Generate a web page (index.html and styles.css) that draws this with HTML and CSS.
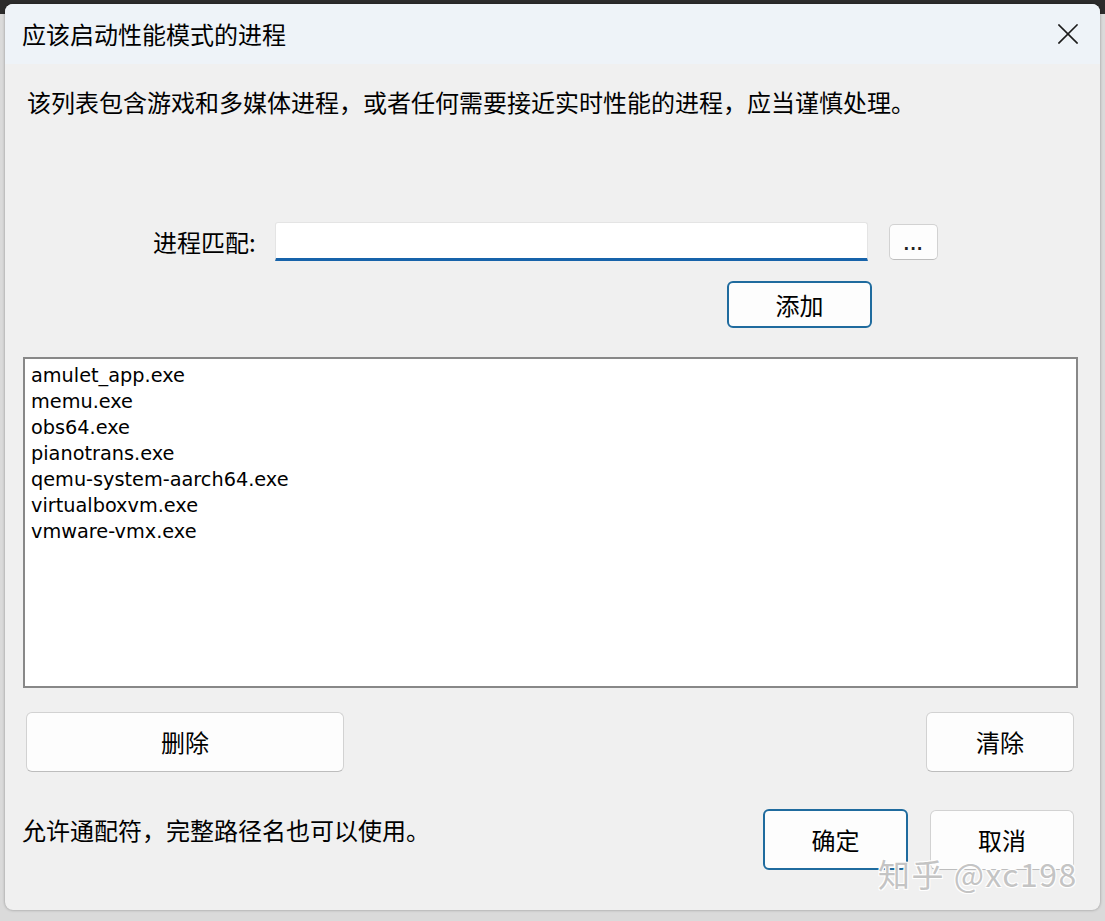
FILE: index.html
```html
<!DOCTYPE html>
<html>

<head>
  <meta charset="UTF-8" />
  <title>应该启动性能模式的进程</title>
  <link rel="stylesheet" href="styles.css">
</head>

<body>
  <div class="dialog">
    <div class="titlebar">
      <span class="title">应该启动性能模式的进程</span>
      <svg class="close" xmlns="http://www.w3.org/2000/svg" viewBox="0 0 20 20" fill="none" stroke="currentColor"
        stroke-width="1.6" stroke-linecap="square">
        <line x1="1" y1="1" x2="19" y2="19"></line>
        <line x1="19" y1="1" x2="1" y2="19"></line>
      </svg>
    </div>

    <div class="content">
      <p class="desc">该列表包含游戏和多媒体进程，或者任何需要接近实时性能的进程，应当谨慎处理。</p>

      <div class="match-row">
        <label for="procMatch">进程匹配:</label>
        <input type="text" id="procMatch" />
        <button class="btn btn-browse">...</button>
      </div>

      <div class="add-row">
        <button class="btn btn-primary btn-add">添加</button>
      </div>

      <ul class="proc-list">
        <li>amulet_app.exe</li>
        <li>memu.exe</li>
        <li>obs64.exe</li>
        <li>pianotrans.exe</li>
        <li>qemu-system-aarch64.exe</li>
        <li>virtualboxvm.exe</li>
        <li>vmware-vmx.exe</li>
      </ul>

      <div class="list-actions">
        <button class="btn btn-delete">删除</button>
        <button class="btn btn-clear">清除</button>
      </div>

      <div class="footer">
        <span class="hint">允许通配符，完整路径名也可以使用。</span>
        <div class="footer-buttons">
          <button class="btn btn-primary btn-ok">确定</button>
          <button class="btn btn-cancel">取消</button>
        </div>
      </div>
    </div>

    <div class="watermark">知乎 @xc198</div>
  </div>
</body>

</html>
```

FILE: styles.css
```css
body {
  margin: 0;
  height: 921px;
  overflow: hidden;
  font-family: "Noto Sans CJK SC", "Noto Sans", sans-serif;
  background: linear-gradient(#2c2c2c 0, #2c2c2c 14px, #dadada 14px);
}

.dialog {
  position: relative;
  margin: 4px 0 0 5px;
  width: 1095px;
  height: 906px;
  border-radius: 8px;
  background-color: #f0f0f0;
  overflow: hidden;
  box-shadow: 0 0 3px rgba(0, 0, 0, 0.35);
}

.titlebar {
  height: 60px;
  background-color: #eef3f8;
  display: flex;
  align-items: center;
  justify-content: space-between;
  padding: 0 22px 0 17px;
}

.title {
  font-size: 24px;
  line-height: 24px;
  color: #000;
}

.close {
  width: 20px;
  height: 20px;
  color: #1b1b1b;
}

.content {
  display: flex;
  flex-direction: column;
}

.desc {
  margin: 26px 0 0 22px;
  font-size: 24px;
  line-height: 24px;
  color: #000;
}

.match-row {
  margin-top: 108px;
  padding-left: 148px;
  display: flex;
  align-items: center;
  height: 39px;
}

label {
  width: 122px;
  font-size: 24px;
  line-height: 24px;
  color: #000;
}

input {
  box-sizing: border-box;
  width: 593px;
  height: 39px;
  margin: 0;
  padding: 0 8px;
  border: 1px solid #e4e4e4;
  border-bottom: 3px solid #1763aa;
  border-radius: 3px 3px 0 0;
  background-color: #fff;
  font-size: 18px;
  outline: none;
}

.btn {
  box-sizing: border-box;
  margin: 0;
  padding: 0;
  background-color: #fdfdfd;
  border: 1px solid #d2d2d2;
  border-bottom-color: #bdbdbd;
  border-radius: 6px;
  font-family: "Noto Sans CJK SC", "Noto Sans", sans-serif;
  font-size: 24px;
  line-height: 24px;
  color: #000;
  display: flex;
  align-items: center;
  justify-content: center;
}

.btn-primary {
  border: 2px solid #1f6b9e;
  background-color: #fdfdfd;
}

.btn-browse {
  width: 49px;
  height: 36px;
  margin-left: 21px;
  border-radius: 5px;
  font-family: "DejaVu Sans", sans-serif;
  font-size: 15px;
  font-weight: bold;
  letter-spacing: 1px;
  padding-top: 6px;
  color: #222;
}

.add-row {
  margin-top: 20px;
  padding-left: 722px;
  display: flex;
}

.btn-add {
  width: 145px;
  height: 47px;
}

.proc-list {
  box-sizing: border-box;
  list-style: none;
  margin: 29px 0 0 18px;
  padding: 4px 6px;
  width: 1055px;
  height: 331px;
  border: 2px solid #888;
  background-color: #fff;
  font-family: "DejaVu Sans", sans-serif;
  font-size: 19.3px;
  line-height: 26px;
  color: #000;
}

.list-actions {
  margin-top: 24px;
  padding: 0 26px 0 21px;
  display: flex;
  justify-content: space-between;
}

.btn-delete {
  width: 318px;
  height: 60px;
}

.btn-clear {
  width: 148px;
  height: 60px;
}

.footer {
  margin-top: 37px;
  padding: 0 26px 0 17px;
  display: flex;
  justify-content: space-between;
}

.hint {
  margin-top: 9px;
  font-size: 24px;
  line-height: 24px;
  color: #000;
}

.footer-buttons {
  display: flex;
  gap: 22px;
}

.btn-ok {
  width: 145px;
  height: 61px;
}

.btn-cancel {
  width: 144px;
  height: 60px;
  margin-top: 1px;
}

.watermark {
  position: absolute;
  left: 873px;
  top: 854px;
  font-size: 32px;
  line-height: 30px;
  letter-spacing: 1.5px;
  color: #c4c4c4;
  text-shadow: 1px 1px 0 #fff, -1px -1px 0 #fff, 1px -1px 0 #fff, -1px 1px 0 #fff;
  white-space: nowrap;
}
```
